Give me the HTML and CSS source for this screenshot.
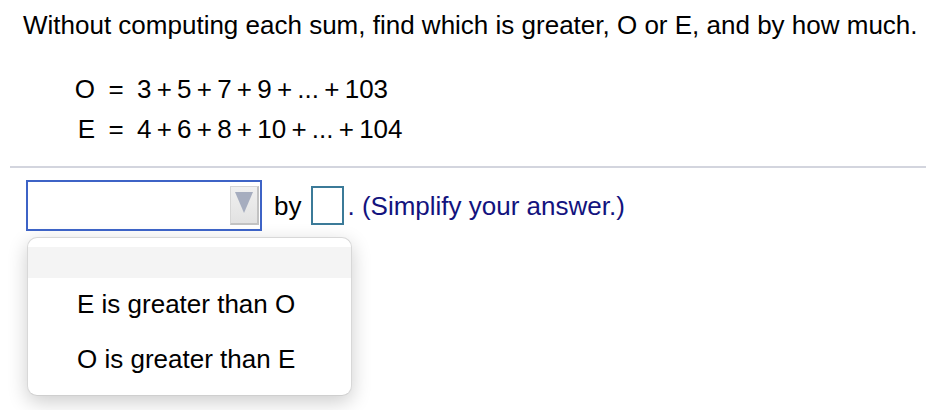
FILE: index.html
```html
<!DOCTYPE html>
<html>
<head>
<meta charset="utf-8">
<link rel="stylesheet" href="styles.css">
</head>
<body>
<div class="page">
  <p class="question">Without computing each sum, find which is greater, O or E, and by how much.</p>
  <table class="eqs">
    <tr><td class="var">O</td><td class="eq">=</td><td class="expr">3 + 5 + 7 + 9 + ... + 103</td></tr>
    <tr><td class="var">E</td><td class="eq">=</td><td class="expr">4 + 6 + 8 + 10 + ... + 104</td></tr>
  </table>
  <div class="divider"></div>
  <div class="answer">
    <div class="select">
      <span class="arrow-btn"><span class="arrow"></span></span>
    </div>
    <span class="by">by</span>
    <span class="box"></span>
    <span class="hint">. (Simplify your answer.)</span>
  </div>
  <div class="menu">
    <div class="opt blank"></div>
    <div class="opt">E is greater than O</div>
    <div class="opt">O is greater than E</div>
  </div>
</div>
</body>
</html>
```
FILE: styles.css
```css
html, body { margin: 0; padding: 0; background: #fff; }
body { font-family: "Liberation Sans", Arial, sans-serif; color: #000; font-size: 26px; min-height: 410px; }
.page { padding: 10px 0 20px 10px; }
.question { margin: 0 0 0 13px; font-size: 26px; line-height: 30px; }
.eqs { border-collapse: collapse; margin: 29px 0 0 0; font-size: 26px; }
.eqs td { padding: 0; height: 40px; line-height: 40px; }
.var { width: 85px; text-align: right; }
.eq { width: 42px; text-align: center; }
.expr { word-spacing: -2px; }
.divider { height: 2px; background: #d3d5de; margin-top: 17px; }
.answer { display: flex; align-items: center; margin: 12px 0 0 16px; line-height: 30px; }
.select { width: 231px; height: 47px; border: 2px solid #3d63c6; display: flex; align-items: center; justify-content: flex-end; padding-right: 1px; box-sizing: content-box; }
.arrow-btn { width: 29px; height: 39px; background: linear-gradient(#f0f0f0, #e2e2e2); border: 1px solid #d6d6d6; border-right: 2px solid #c2c2c2; border-bottom: 2px solid #c2c2c2; box-sizing: border-box; display: flex; justify-content: center; padding-top: 5px; }
.arrow { width: 0; height: 0; border-left: 9px solid transparent; border-right: 9px solid transparent; border-top: 21px solid #a6adbf; }
.by { margin-left: 12px; }
.box { width: 29px; height: 35px; border: 2px solid #3b7a98; margin-left: 10px; }
.hint { color: #13137e; margin-left: 3px; }
.menu { margin: 6px 0 0 17px; width: 325px; background: #fff; border: 1px solid #d8d8d8; border-bottom-color: #cfcfcf; border-radius: 10px; box-shadow: 0 6px 20px rgba(0,0,0,0.2); padding: 9px 0 7px; box-sizing: border-box; overflow: hidden; }
.opt { height: 55px; line-height: 52px; padding-left: 49px; font-size: 26px; }
.opt.blank { height: 31px; background: #f4f4f4; }
```
